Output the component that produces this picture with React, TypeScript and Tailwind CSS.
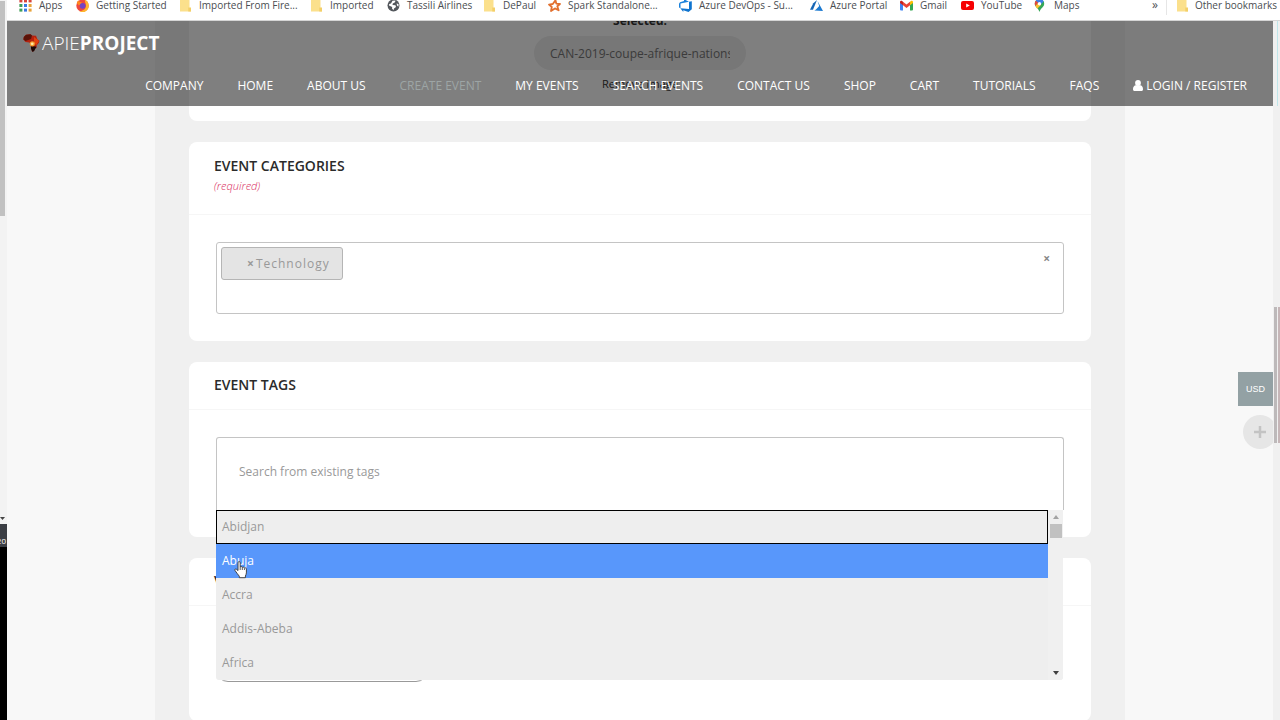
import React from "react";

const OPTIONS = ["Abidjan", "Abuja", "Accra", "Addis-Abeba", "Africa"];

const NAV = [
  "COMPANY",
  "HOME",
  "ABOUT US",
  "CREATE EVENT",
  "MY EVENTS",
  "SEARCH EVENTS",
  "CONTACT US",
  "SHOP",
  "CART",
  "TUTORIALS",
  "FAQS",
];

function AppsIcon() {
  const colors = ["#d9453a", "#d9453a", "#d9453a", "#3f9d57", "#3b78e0", "#e8a33a", "#3f9d57", "#3b78e0", "#e8a33a"];
  return (
    <svg viewBox="0 0 13 13" className="size-[13px]" aria-hidden="true">
      {colors.map((c, i) => (
        <rect key={i} x={(i % 3) * 4.6 + 0.4} y={Math.floor(i / 3) * 4.6 + 0.4} width="3" height="3" fill={c} />
      ))}
    </svg>
  );
}

function FirefoxIcon() {
  return (
    <svg viewBox="0 0 13 13" className="size-[13px]" aria-hidden="true">
      <circle cx="6.5" cy="6.7" r="6.2" fill="#f0483e" />
      <path d="M9 .6c2.5 1.6 4 4 3.800 6.400A6.300 6.300 0 0 1 3 12c4 .5 7-2 7-5.200C10 4 8.500 3 9 .6Z" fill="#ffb52e" />
      <path d="M.8 4C1.200 2.500 2 1.800 2.600 1.200c0 .8.500 1.300 1 1.500L6.500 4 3 6.500Z" fill="#ff8a1e" />
      <circle cx="6.600" cy="6.800" r="2.900" fill="#7443c4" />
    </svg>
  );
}

function FolderIcon() {
  return (
    <svg viewBox="0 0 13 13" className="size-[13px]" aria-hidden="true">
      <path d="M1 .5h9.500v8.500H12v3.500H1Z" fill="#fbe08c" />
      <path d="M9.300 8.500H12v4H9.300Z" fill="#f3cf68" />
    </svg>
  );
}

function GlobeIcon() {
  return (
    <svg viewBox="0 0 13 13" className="size-[13px]" aria-hidden="true">
      <circle cx="6.500" cy="6.500" r="6" fill="#53575c" />
      <path d="M5.500 1.800 8.500 1.500 8 3.300 5.800 4.500 5.500 6 8.500 6.300 9 8 7 9.500 6.500 11.300 5 9.500 5.200 8 2 6.500 2.200 5 4 4.500Z" fill="#fff" />
      <path d="M9.500 4.500 11.500 5v2.500L10.300 7Z" fill="#fff" />
    </svg>
  );
}

function SparkIcon() {
  return (
    <svg viewBox="0 0 13 13" className="size-[13px]" aria-hidden="true">
      <path
        d="M7.500 1.200 8.300 4.600 12 5 9.300 7.300 10.600 11.300 6.900 9.400 3 12 3.800 8 1 5.600 4.800 5Z"
        fill="none"
        stroke="#e2702f"
        strokeWidth="1.800"
        strokeLinejoin="round"
      />
    </svg>
  );
}

function DevOpsIcon() {
  return (
    <svg viewBox="0 0 13 13" className="size-[13px]" aria-hidden="true">
      <path d="M12.800 2.300v8L9.500 13 4.300 11.200V13L1.300 9.200l8.700.7V2.700Z" fill="#0f74cf" />
      <path d="M10 2.700 5 .2v1.900L1 3.300 0 4.800v3.700l1.500.7V4.500Z" fill="#1b82dc" />
    </svg>
  );
}

function AzureIcon() {
  return (
    <svg viewBox="0 0 13 13" className="size-[13px]" aria-hidden="true">
      <path d="M7 1 3.300 4.200 0 10.800h3Z" fill="#1565b5" />
      <path d="m7.500 2 1.700 5L6 10.500l-1.700.9L13 12Z" fill="#1c7ad1" />
    </svg>
  );
}

function GmailIcon() {
  return (
    <svg viewBox="0 0 13 13" className="size-[13px]" aria-hidden="true">
      <path d="M0 3.500 3 5.500v6H1a1 1 0 0 1-1-1Z" fill="#4285f4" />
      <path d="M13 3.500 10 5.500v6h2a1 1 0 0 0 1-1Z" fill="#34a853" />
      <path d="M3 2.700 6.500 5.400 10 2.700v3.500L6.500 8.900 3 6.200Z" fill="#ea4335" />
      <path d="M0 3.200C0 1.800 1.600 1.500 2.400 2.200l.6.500v3.500L0 4Z" fill="#c5221f" />
      <path d="M13 3.200c0-1.400-1.600-1.700-2.400-1l-.6.500v3.500L13 4Z" fill="#fbbc04" />
    </svg>
  );
}

function YouTubeIcon() {
  return (
    <svg viewBox="0 0 13 13" className="size-[13px]" aria-hidden="true">
      <rect x="0" y="2" width="13" height="9" rx="2" fill="#f60002" />
      <path d="M5.200 4.500 8.800 6.500 5.200 8.500Z" fill="#fff" />
    </svg>
  );
}

function MapsIcon() {
  return (
    <svg viewBox="0 0 13 13" className="size-[13px]" aria-hidden="true">
      <path d="M5.500 0C2.800 0 .8 2.100.8 4.700c0 3.300 3.700 4.300 4.700 8.300 1-4 4.700-5 4.700-8.300C10.200 2.100 8.200 0 5.500 0Z" fill="#36a757" />
      <path d="M5.500 0c1.900 0 3.400.9 4.200 2.400L5.500 6.500 2 2.500 1.800 1.800A4.600 4.600 0 0 1 5.500 0Z" fill="#3f7fe8" />
      <path d="M1.900 1.700 4.200 3.800 1.500 7C.3 5.200.6 3 1.900 1.700Z" fill="#e5473a" />
      <path d="M1.500 7 4 4l2.800 2L3.300 9.700C2.600 8.800 2 8 1.500 7Z" fill="#fbc02d" />
      <circle cx="5.500" cy="4.700" r="1.700" fill="#fff" />
    </svg>
  );
}

const BOOKMARKS = [
  { label: "Apps", Icon: AppsIcon, width: "w-[57px]" },
  { label: "Getting Started", Icon: FirefoxIcon, width: "w-[103px]" },
  { label: "Imported From Fire...", Icon: FolderIcon, width: "w-[131px]" },
  { label: "Imported", Icon: FolderIcon, width: "w-[77px]" },
  { label: "Tassili Airlines", Icon: GlobeIcon, width: "w-[96px]" },
  { label: "DePaul", Icon: FolderIcon, width: "w-[65px]" },
  { label: "Spark Standalone...", Icon: SparkIcon, width: "w-[131px]" },
  { label: "Azure DevOps - Su...", Icon: DevOpsIcon, width: "w-[131px]" },
  { label: "Azure Portal", Icon: AzureIcon, width: "w-[90px]" },
  { label: "Gmail", Icon: GmailIcon, width: "w-[61px]" },
  { label: "YouTube", Icon: YouTubeIcon, width: "w-[73px]" },
  { label: "Maps", Icon: MapsIcon, width: "w-[60px]" },
];

function BookmarksBar() {
  return (
    <div className="flex h-[21px] shrink-0 flex-col justify-end overflow-hidden border-b border-[#d5d5d5] bg-white">
      <div className="flex h-[30px] shrink-0 items-center pl-3 text-[10px] whitespace-nowrap text-[#4a4d51]">
        {BOOKMARKS.map(({ label, Icon, width }) => (
          <a key={label} href="#" className={`flex shrink-0 items-center gap-[7px] ${width}`}>
            <Icon />
            {label}
          </a>
        ))}
        <button type="button" aria-label="More bookmarks" className="ml-auto px-2 text-[12px]">
          »
        </button>
        <a href="#" className="flex h-5 items-center gap-[6px] border-l border-[#e6e6e6] pr-[3px] pl-[9px]">
          <FolderIcon />
          Other bookmarks
        </a>
      </div>
    </div>
  );
}

function AfricaLogo() {
  return (
    <svg viewBox="0 0 17 18" className="h-[18px] w-[17px]" aria-hidden="true">
      <path
        d="M3 .8 7.500.3 9 1.500l4 .3 1.500 3.700 2 1.200-.8 2.300-2.200 2.500.2 2-1.700 1.200-1 2.300-1.800.7L8 14.500l-.3-3.200L6.500 8.500 2.500 8 .4 5.500.8 3Z"
        fill="#b3220f"
      />
      <path d="M3 .8 7.500.3 9 1.500 8 5 2.500 7 .4 5.500.8 3Z" fill="#5a1208" />
      <path d="M11 3 14.500 5.500l1.500 1.500-2.500 4-2.500-1Z" fill="#e2400f" />
      <path d="m8 12 5.500.8-1.500 2.500-1 2-1.800.4L8 14.500Z" fill="#1c0806" />
      <circle cx="9.300" cy="9.800" r="2.600" fill="#f59a2a" />
      <circle cx="9.200" cy="9.800" r="1.400" fill="#ffe9a8" />
    </svg>
  );
}

function SiteHeader() {
  return (
    <header className="absolute inset-x-0 top-0 z-20 flex h-[85px] flex-col bg-black/50 text-white">
      <a href="#" className="flex h-11 items-center gap-[2px] pl-4 text-[19px] leading-6">
        <AfricaLogo />
        <span className="font-light">
          APIE<b className="font-bold">PROJECT</b>
        </span>
      </a>
      <nav className="flex h-[41px] items-center justify-end gap-[34px] pr-[26px] text-[12px] font-medium whitespace-nowrap">
        {NAV.map((item) => (
          <a key={item} href="#" className={item === "CREATE EVENT" ? "text-[#9da5a5]" : ""}>
            {item}
          </a>
        ))}
        <a href="#" className="flex items-center gap-[3px]">
          <svg viewBox="0 0 10 11" className="h-[11px] w-[10px]" fill="currentColor" aria-hidden="true">
            <circle cx="5" cy="3" r="2.900" />
            <path d="M2.500 5.200h5c1.700.5 2.500 2 2.500 4 0 1-.6 1.800-1.600 1.800H1.600C.6 11 0 10.200 0 9.200c0-2 .8-3.500 2.500-4Z" />
          </svg>
          LOGIN / REGISTER
        </a>
      </nav>
    </header>
  );
}

function CardTitle({ children }: { children: React.ReactNode }) {
  return <h2 className="text-[14px] leading-5 font-semibold text-[#2b2b2b]">{children}</h2>;
}

function TagDropdown() {
  return (
    <div className="absolute top-full right-px left-0 z-10 flex overflow-hidden rounded-b-[3px] bg-[#eee]">
      <ul role="listbox" aria-label="Existing tags" className="flex-1 text-[12px] text-[#999]">
        {OPTIONS.map((name, i) => (
          <li
            key={name}
            role="option"
            aria-selected={i === 1}
            className={`flex h-[34px] items-center border px-[5px] ${
              i === 0
                ? "border-black"
                : i === 1
                  ? "border-[#5897fb] bg-[#5897fb] text-white"
                  : "border-transparent"
            }`}
          >
            {name}
          </li>
        ))}
      </ul>
      <div className="flex w-[15px] flex-col items-center bg-[#f0f0f0] py-[5px]">
        <svg viewBox="0 0 6 4" className="h-1 w-[6px] shrink-0" aria-hidden="true">
          <path d="M0 4 3 0l3 4Z" fill="#a3a3a3" />
        </svg>
        <div className="mt-[5px] h-[14px] w-3 bg-[#c1c1c1]" />
        <svg viewBox="0 0 6 4" className="mt-auto h-1 w-[6px] shrink-0" aria-hidden="true">
          <path d="M0 0 3 4l3-4Z" fill="#404040" />
        </svg>
      </div>
      <svg viewBox="0 0 14 18" className="absolute top-[51px] left-[18px] h-[18px] w-[14px]" aria-hidden="true">
        <path
          d="M4 1.700c0-1.500 2.200-1.500 2.200 0V6c.4-.7 1.900-.6 2.100.4.500-.6 1.900-.4 2.100.6.600-.5 2-.1 2 1.100v3.800c0 1.300-.7 2-1 3.100v1.700H5.300v-1.500C4 13.700 2.500 11.500 1 9.500.3 8.300 1.700 7.500 2.700 8.400L4 9.600Z"
          fill="#fff"
          stroke="#333"
          strokeWidth=".9"
          strokeLinejoin="round"
        />
        <path d="M6.200 6v3M8.300 6.500V9M10.400 7.200V9" stroke="#333" strokeWidth=".8" />
      </svg>
    </div>
  );
}

function EventForm() {
  return (
    <form className="mx-auto flex min-h-full max-w-[970px] flex-col gap-[21px] bg-[#f0f0f0] px-[34px]">
      <section className="flex h-[100px] shrink-0 flex-col items-center overflow-hidden rounded-b-lg bg-white text-[12px] text-[#333]">
        <label htmlFor="image-name" className="-mt-[10px] leading-5 font-bold">
          Selected:
        </label>
        <input
          id="image-name"
          readOnly
          defaultValue="CAN-2019-coupe-afrique-nations"
          className="mt-[5px] h-[34px] w-[212px] rounded-full bg-[#eee] px-4 text-[#777]"
        />
        <button type="button" className="mt-1 text-[11px] leading-5">
          Remove Image
        </button>
      </section>

      <section className="shrink-0 rounded-lg bg-white">
        <div className="h-[73px] border-b border-[#f6f6f6] px-[25px] pt-[14px]">
          <CardTitle>EVENT CATEGORIES</CardTitle>
          <p className="text-[11px] leading-5 font-light text-[#d9295c] italic">(required)</p>
        </div>
        <div className="p-[27px]">
          <div className="flex h-[72px] items-start justify-between rounded-[3px] border border-[#c4c4c4] p-1">
            <span className="flex h-[33px] items-center gap-px rounded-[3px] border border-[#b5b5b5] bg-[#e4e4e4] pr-3 pl-[25px] text-[12px] tracking-[1px] text-[#999]">
              <button type="button" aria-label="Remove Technology" className="font-bold">
                ×
              </button>
              Technology
            </span>
            <button type="button" aria-label="Clear all" className="mt-1 mr-[9px] text-[12px] leading-4 font-bold text-[#888]">
              ×
            </button>
          </div>
        </div>
      </section>

      <section className="shrink-0 rounded-lg bg-white">
        <div className="h-12 border-b border-[#f6f6f6] px-[25px] pt-[13px]">
          <CardTitle>EVENT TAGS</CardTitle>
        </div>
        <div className="p-[27px]">
          <div className="relative">
            <input
              type="text"
              aria-label="Event tags"
              placeholder="Search from existing tags"
              className="block h-[73px] w-full rounded-t-[3px] border border-b-0 border-[#c4c4c4] px-[22px] pb-[6px] text-[12px] placeholder:text-[#999]"
            />
            <TagDropdown />
          </div>
        </div>
      </section>

      <section className="h-[163px] shrink-0 rounded-lg bg-white">
        <div className="h-12 border-b border-[#f6f6f6] px-[25px] pt-[13px]">
          <CardTitle>VENUE</CardTitle>
        </div>
        <div className="px-[27px] pt-[41px]">
          <input aria-label="Venue" className="h-[35px] w-[212px] rounded-xl border border-[#999] px-3" />
        </div>
      </section>
    </form>
  );
}

function LeftEdge() {
  return (
    <div className="flex w-[7px] shrink-0 flex-col overflow-hidden bg-[#f3f3f3]">
      <div className="mt-px h-[215px] w-[5px] bg-[#c1c1c1]" />
      <svg viewBox="0 0 5 3" className="mt-[301px] h-[3px] w-[5px]" aria-hidden="true">
        <path d="M0 0h5L2.500 3Z" fill="#444" />
      </svg>
      <div className="mt-1 flex h-[23px] items-end justify-end bg-[#3b3e44] pr-px text-[8px] leading-3 text-white">20</div>
      <div className="flex-1 bg-black" />
    </div>
  );
}

function RightEdge() {
  return (
    <div className="flex w-[7px] shrink-0 flex-col items-end bg-[#f0f0f0]">
      <div className="mr-[2px] h-[85px] w-px bg-[#bfe6ea]" />
      <div className="mt-[201px] flex h-[136px] w-[6px] gap-px">
        <div className="w-[3px] bg-[#bdb9ba]" />
        <div className="w-[2px] bg-[#c6b6b8]" />
      </div>
    </div>
  );
}

export default function App() {
  return (
    <div className="flex h-screen overflow-hidden bg-[#f8f8f8] font-['Open_Sans',sans-serif]">
      <LeftEdge />
      <div className="flex min-w-0 flex-1 flex-col">
        <BookmarksBar />
        <div className="flex min-h-0 flex-1">
          <main className="relative min-w-0 flex-1 overflow-hidden">
            <SiteHeader />
            <EventForm />
            <div className="absolute top-[351px] right-0 flex w-[35px] flex-col items-end gap-[9px]">
              <button
                type="button"
                className="h-[34px] w-full bg-[#93a1a4] pt-px font-['Liberation_Sans',sans-serif] text-[9px] text-white"
              >
                USD
              </button>
              <button
                type="button"
                aria-label="Add"
                className="-mr-1 flex size-[34px] items-center justify-center rounded-full bg-[#e6e6e6]"
              >
                <svg viewBox="0 0 12 12" className="size-3" aria-hidden="true">
                  <path d="M6 0v12M0 6h12" stroke="#c3c3c3" strokeWidth="2.500" />
                </svg>
              </button>
            </div>
          </main>
          <RightEdge />
        </div>
      </div>
    </div>
  );
}
